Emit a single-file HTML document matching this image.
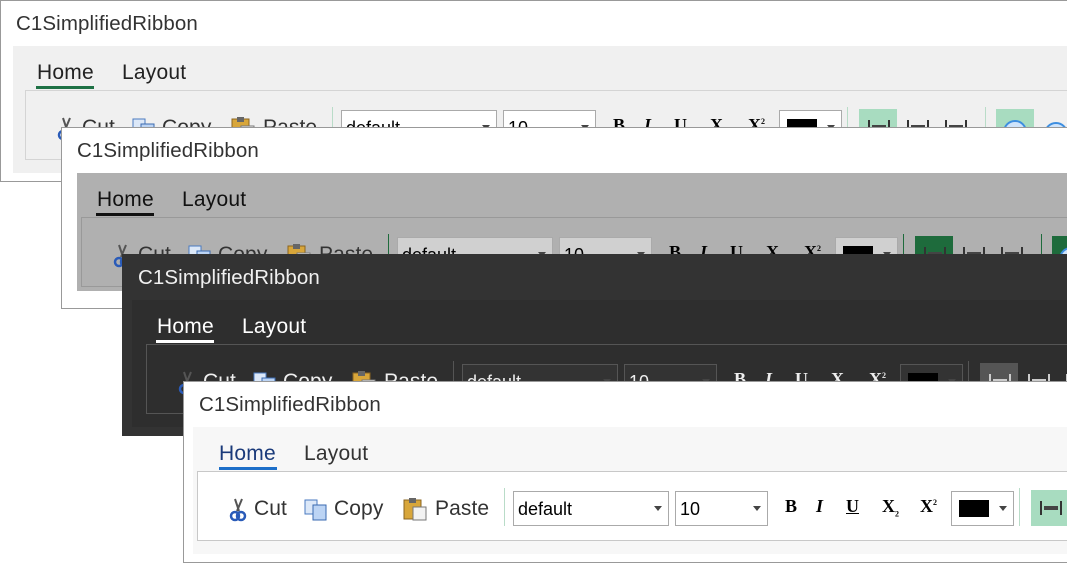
<!DOCTYPE html>
<html><head><meta charset="utf-8">
<style>
*{margin:0;padding:0;box-sizing:border-box}
body{width:1067px;height:560px;overflow:hidden;background:#fff;position:relative;font-family:"Liberation Sans",sans-serif}
.win{position:absolute;right:0;height:182px;border:1px solid #888;border-right:none;overflow:hidden}
.title{position:absolute;left:15px;top:11px;font-size:20.5px;letter-spacing:0.1px}
.rib{position:absolute;left:9px;top:45px;right:0;height:127px}
.tab{position:absolute;top:15px;font-size:21px;letter-spacing:0.2px}
.ul{position:absolute;left:26px;top:40px;width:58px;height:3px}
.tb{position:absolute;left:4px;top:44px;right:-2px;height:70px;border:1px solid #c8c8c8}
.it{position:absolute;top:25px;font-size:21px;letter-spacing:0.1px}
.ic{position:absolute;top:26px}
.sep{position:absolute;top:16px;width:1px;height:38px;background:#b9dcc8}
.cb{position:absolute;top:19px;height:35px;border:1px solid #aaa;background:#fff;font-size:18px;padding:7px 0 0 4px}
.cb i{position:absolute;right:6px;top:14px;border-left:4px solid transparent;border-right:4px solid transparent;border-top:5px solid #444}
.f{position:absolute;top:24px;font-family:"Liberation Serif",serif;font-weight:bold;font-size:18px}
.gbtn{position:absolute;top:18px;width:38px;height:36px;background:#a8dcc0}
.al{position:absolute;top:29px;width:22px;height:14px;border-left:2px solid #333;border-right:2px solid #333}
.al b{position:absolute;left:2px;right:2px;top:5px;height:4px;background:#444}
</style></head><body>

<div class="win" style="left:0;top:0;background:#fff;border-color:#999">
 <div class="title" style="color:#333">C1SimplifiedRibbon</div>
 <div class="rib" style="background:#f0f0f0;left:12px">
  <div class="tab" style="left:24px;color:#222">Home</div><div class="tab" style="left:109px;color:#222">Layout</div>
  <div class="ul" style="left:23px;background:#1e7145"></div>
  <div class="tb" style="left:12px;border-color:#d4d4d4;background:#f0f0f0"></div>
 </div>
</div>

<div class="win" style="left:61px;top:127px;background:#fff;border-color:#999">
 <div class="title" style="color:#333">C1SimplifiedRibbon</div>
 <div class="rib" style="background:#b0b0b0;left:15px;height:118px">
  <div class="tab" style="left:20px;color:#111">Home</div><div class="tab" style="left:105px;color:#111">Layout</div>
  <div class="ul" style="left:19px;background:#111"></div>
  <div class="tb" style="left:4px;border-color:#999;background:#b0b0b0"></div>
 </div>
</div>

<div class="win" style="left:122px;top:254px;background:#333;border-color:#333">
 <div class="title" style="color:#f0f0f0">C1SimplifiedRibbon</div>
 <div class="rib" style="background:#2e2e2e;left:9px">
  <div class="tab" style="left:25px;color:#fff">Home</div><div class="tab" style="left:110px;color:#fff">Layout</div>
  <div class="ul" style="left:24px;background:#fff"></div>
  <div class="tb" style="left:14px;border-color:#555;background:#2e2e2e"></div>
 </div>
</div>

<div class="win" id="w4" style="left:183px;top:381px;background:#fff;border-color:#999">
 <div class="title" style="color:#333">C1SimplifiedRibbon</div>
 <div class="rib" style="background:#f7f7f7">
  <div class="tab" style="left:26px;color:#1a3a7a">Home</div><div class="tab" style="left:111px;color:#333">Layout</div>
  <div class="ul" style="left:26px;width:58px;background:#1d6fc9"></div>
  <div class="tb" style="background:#fff">
   <svg class="ic" style="left:31px;top:26px" width="18" height="24" viewBox="0 0 18 24"><path d="M6 1 L10 13 M13 1 L8 13" stroke="#555" stroke-width="2" fill="none"/><circle cx="6" cy="18" r="4" fill="none" stroke="#2a5bb8" stroke-width="2.5"/><circle cx="12" cy="18" r="4" fill="none" stroke="#2a5bb8" stroke-width="2.5"/></svg>
   <div class="it" style="left:56px;color:#333">Cut</div>
   <svg class="ic" style="left:106px;top:27px" width="26" height="22" viewBox="0 0 26 22"><rect x="1" y="1" width="12" height="14" fill="#dce8f8" stroke="#4a7ac0"/><rect x="9" y="6" width="13" height="15" fill="#bcd4f4" stroke="#3a6ab0"/></svg>
   <div class="it" style="left:136px;color:#333">Copy</div>
   <svg class="ic" style="left:205px;top:25px" width="26" height="24" viewBox="0 0 26 24"><rect x="1" y="3" width="17" height="19" fill="#d8a63a" stroke="#8a6420"/><rect x="6" y="1" width="7" height="5" fill="#666"/><rect x="10" y="10" width="13" height="13" fill="#f2f2f2" stroke="#777"/></svg>
   <div class="it" style="left:237px;color:#333">Paste</div>
   <div class="sep" style="left:306px"></div>
   <div class="cb" style="left:315px;width:156px">default<i></i></div>
   <div class="cb" style="left:477px;width:93px">10<i></i></div>
   <div class="f" style="left:587px">B</div>
   <div class="f" style="left:618px;font-style:italic">I</div>
   <div class="f" style="left:648px;text-decoration:underline">U</div>
   <div class="f" style="left:684px">X<sub style="font-size:8px">2</sub></div>
   <div class="f" style="left:722px">X<sup style="font-size:8px">2</sup></div>
   <div class="cb" style="left:753px;width:63px;padding:0"><div style="position:absolute;left:7px;top:8px;width:30px;height:17px;background:#000"></div><i></i></div>
   <div class="sep" style="left:821px"></div>
   <div class="gbtn" style="left:833px"></div>
   <div class="al" style="left:842px"><b></b></div>
  </div>
 </div>
</div>

<script>
var src=document.querySelector('#w4 .tb').innerHTML;
var tbs=document.querySelectorAll('.tb');
var extra='<div class="al" style="left:881px"><b></b></div><div class="al" style="left:919px"><b></b></div><div class="sep" style="left:959px"></div><div class="gbtn" style="left:970px"></div><svg class="ic" style="left:975px;top:26px" width="80" height="30"><circle cx="14" cy="15" r="11" fill="#cfe4fb" stroke="#3d8ee0" stroke-width="2"/><circle cx="55" cy="17" r="11" fill="#cfe4fb" stroke="#3d8ee0" stroke-width="2"/></svg>';
for(var i=0;i<3;i++){tbs[i].innerHTML=src+extra;}
tbs[1].querySelectorAll('.gbtn').forEach(function(e){e.style.background='#1e6b3c'});
tbs[1].querySelectorAll('.cb').forEach(function(e){e.style.background='#d0d0d0'});
tbs[1].querySelectorAll('.sep').forEach(function(e){e.style.background='#1e6b3c'});
tbs[2].querySelectorAll('.gbtn').forEach(function(e){e.style.background='#555'});
tbs[2].querySelectorAll('.cb').forEach(function(e){e.style.background='#333';e.style.color='#eee';e.style.borderColor='#555'});
tbs[2].querySelectorAll('.it,.f').forEach(function(e){e.style.color='#eee'});
tbs[2].querySelectorAll('.sep').forEach(function(e){e.style.background='#555'});
tbs[2].querySelectorAll('.al').forEach(function(e){e.style.borderColor='#ccc';e.firstChild.style.background='#ccc'});
</script>
</body></html>
